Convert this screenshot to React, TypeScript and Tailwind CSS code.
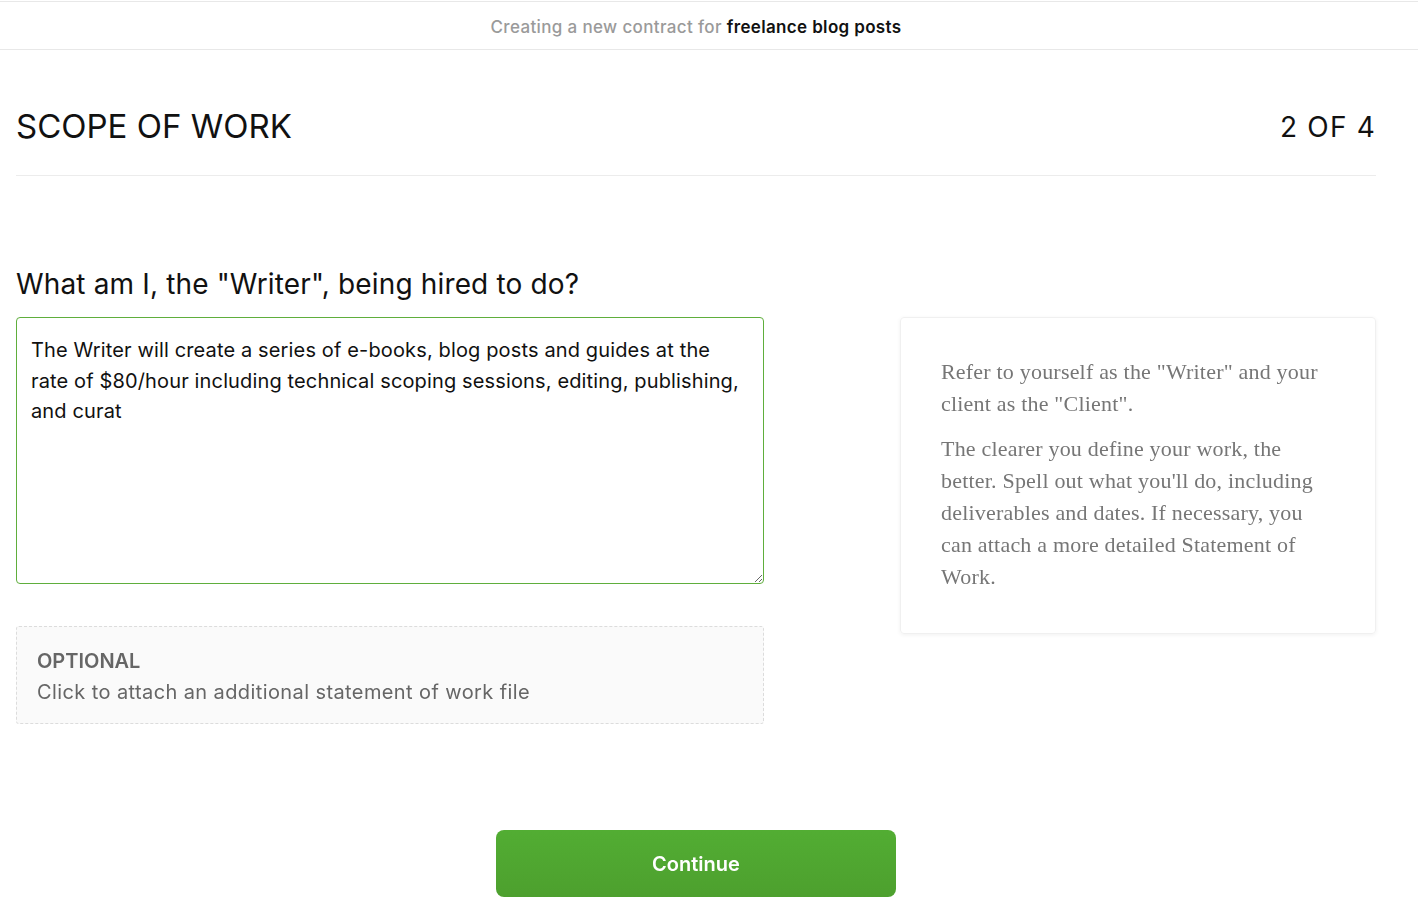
import React from 'react';

const sans = "font-['Inter',sans-serif]";

const App: React.FC = () => {
  const [text, setText] = React.useState(
    'The Writer will create a series of e-books, blog posts and guides at the rate of $80/hour including technical scoping sessions, editing, publishing, and curat'
  );
  const areaRef = React.useRef<HTMLTextAreaElement>(null);

  React.useEffect(() => {
    const el = areaRef.current;
    if (el) {
      el.focus();
      el.setSelectionRange(el.value.length, el.value.length);
    }
  }, []);

  return (
    <div className={`min-h-screen bg-white ${sans}`}>
      <div className="border-y border-[#e8e8e8] h-[49px] mt-[1px]">
        <div className="w-[1392px] h-full flex items-center justify-center pt-[4px] text-[17px] tracking-[0.35px]">
          <span className="text-[#9a9a9a] font-medium">Creating a new contract for&nbsp;</span>
          <span className="text-[#111] font-semibold">freelance blog posts</span>
        </div>
      </div>

      <div className="w-[1360px] ml-4">
        <div className="flex items-center justify-between h-[126px] border-b border-[#ececec] pt-[28px]">
          <h1 className="text-[33px] font-normal text-[#111]">SCOPE OF WORK</h1>
          <div className="text-[28px] tracking-[1.2px] text-[#111]">2 OF 4</div>
        </div>

        <h2 className="mt-[88px] text-[28px] text-[#111] tracking-[0.15px] leading-[40px]">
          What am I, the "Writer", being hired to do?
        </h2>

        <div className="flex mt-[13px] gap-[136px]">
          <div className="w-[748px]">
            <textarea
              ref={areaRef}
              value={text}
              onChange={(e) => setText(e.target.value)}
              className="block w-full h-[267px] border border-[#5fae3c] rounded-[4px] pl-[14px] pr-[18px] py-[17px] text-[20px] leading-[30.5px] tracking-[0.14px] text-[#111] caret-[#111] outline-none resize-y"
            />
            <div className="mt-[42px] h-[98px] border border-dashed border-[#dcdcdc] rounded-[3px] bg-[#fafafa] px-[20px] pt-[19px]">
              <div className="text-[20px] font-semibold text-[#666] leading-[30px]">OPTIONAL</div>
              <div className="text-[20px] text-[#666] leading-[32px] tracking-[0.4px]">Click to attach an additional statement of work file</div>
            </div>
          </div>

          <div className="w-[476px] h-[317px] border border-[#f0f0f0] rounded-[4px] shadow-[0_1px_4px_rgba(0,0,0,0.06)] pl-[40px] pr-[44px] pt-[38px] font-['Liberation_Serif',serif] text-[22px] leading-[32px] tracking-[0.2px] text-[#767676]">
            <p>Refer to yourself as the "Writer" and your client as the "Client".</p>
            <p className="mt-[13px]">
              The clearer you define your work, the better. Spell out what you'll do, including deliverables and dates. If necessary, you can attach a more detailed Statement of Work.
            </p>
          </div>
        </div>

        <div className="flex justify-center mt-[106px]">
          <button className="w-[400px] h-[67px] rounded-[8px] bg-gradient-to-b from-[#52ad33] to-[#4da02e] text-white text-[20px] font-semibold">
            Continue
          </button>
        </div>
      </div>
    </div>
  );
};

export default App;
